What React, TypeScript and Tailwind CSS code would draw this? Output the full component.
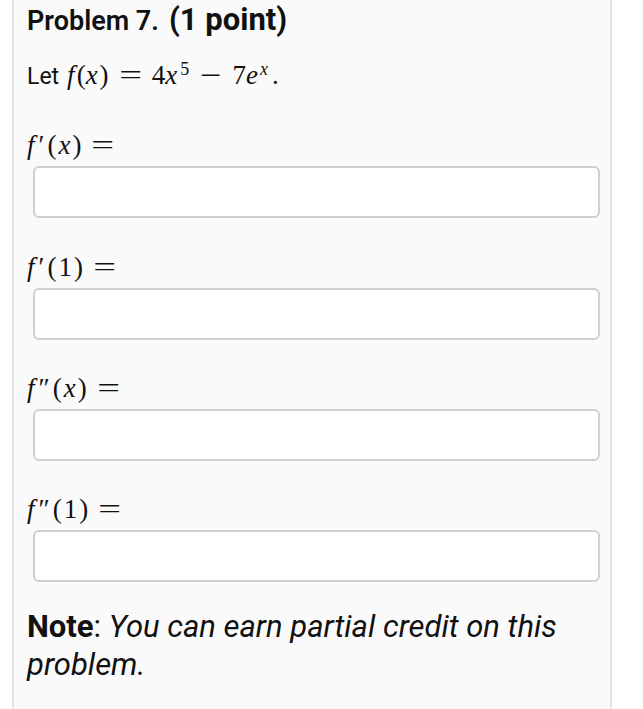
import React from "react";

const M = ({ children }: { children: React.ReactNode }) => (
  <span className="font-['Liberation_Serif',serif] text-[27px] leading-none text-[#111] whitespace-nowrap">{children}</span>
);
const I = ({ children }: { children: React.ReactNode }) => <span className="italic">{children}</span>;
const Eq = () => <span className="inline-block scale-x-[1.5] mx-[14px]">=</span>;

function Label({ primes, arg }: { primes: string; arg: React.ReactNode }) {
  return (
    <div className="h-[30px] flex items-end">
      <M>
        <I>f</I>
        <span className="ml-[4px] mr-[3px]">{primes}</span>
        <span>(</span>
        <span className="mx-[2px]">{arg}</span>
        <span>)</span>
        <Eq />
      </M>
    </div>
  );
}

function Box() {
  return (
    <div className="ml-[6px] mr-[10px] mt-[7px] h-[52px] rounded-[6px] border-2 border-[#d0d0d0] bg-white" />
  );
}

export default function App() {
  return (
    <div className="w-[643px] h-[709px] bg-white overflow-hidden font-['Roboto',sans-serif] text-[#111]">
      <div className="ml-[12px] w-[600px] h-[709px] border-x-2 border-[#e3e3e3] bg-[#fafafa] pl-[13px]">
        <div className="pt-[2px] h-[40px] flex items-baseline leading-[36px]">
          <span className="text-[27px] font-semibold">Problem 7.</span>
          <span className="text-[31px] font-bold ml-[10px]">(1 point)</span>
        </div>
        <div className="mt-[20px] h-[32px] flex items-baseline text-[23px]">
          <span>Let</span>
          <span className="ml-[8px]">
            <M>
              <I>f</I>
              <span className="ml-[2px]">(</span>
              <I>x</I>
              <span className="ml-[2px]">)</span>
              <Eq />
              4<I>x</I>
              <sup className="text-[18px] ml-[3px]">5</sup>
              <span className="mx-[14px] inline-block scale-x-[1.4]">−</span>
              7<I>e</I>
              <sup className="text-[18px] italic ml-[2px]">x</sup>
              <span className="ml-[4px]">.</span>
            </M>
          </span>
        </div>
        <div className="mt-[37px]">
          <Label primes="′" arg={<I>x</I>} />
          <Box />
        </div>
        <div className="mt-[33px]">
          <Label primes="′" arg={<span>1</span>} />
          <Box />
        </div>
        <div className="mt-[32px]">
          <Label primes="″" arg={<I>x</I>} />
          <Box />
        </div>
        <div className="mt-[32px]">
          <Label primes="″" arg={<span>1</span>} />
          <Box />
        </div>
        <p className="mt-[26px] text-[31px] leading-[38px] pr-[20px]">
          <span className="font-bold">Note</span>: <span className="italic">You can earn partial credit on this problem.</span>
        </p>
      </div>
    </div>
  );
}
